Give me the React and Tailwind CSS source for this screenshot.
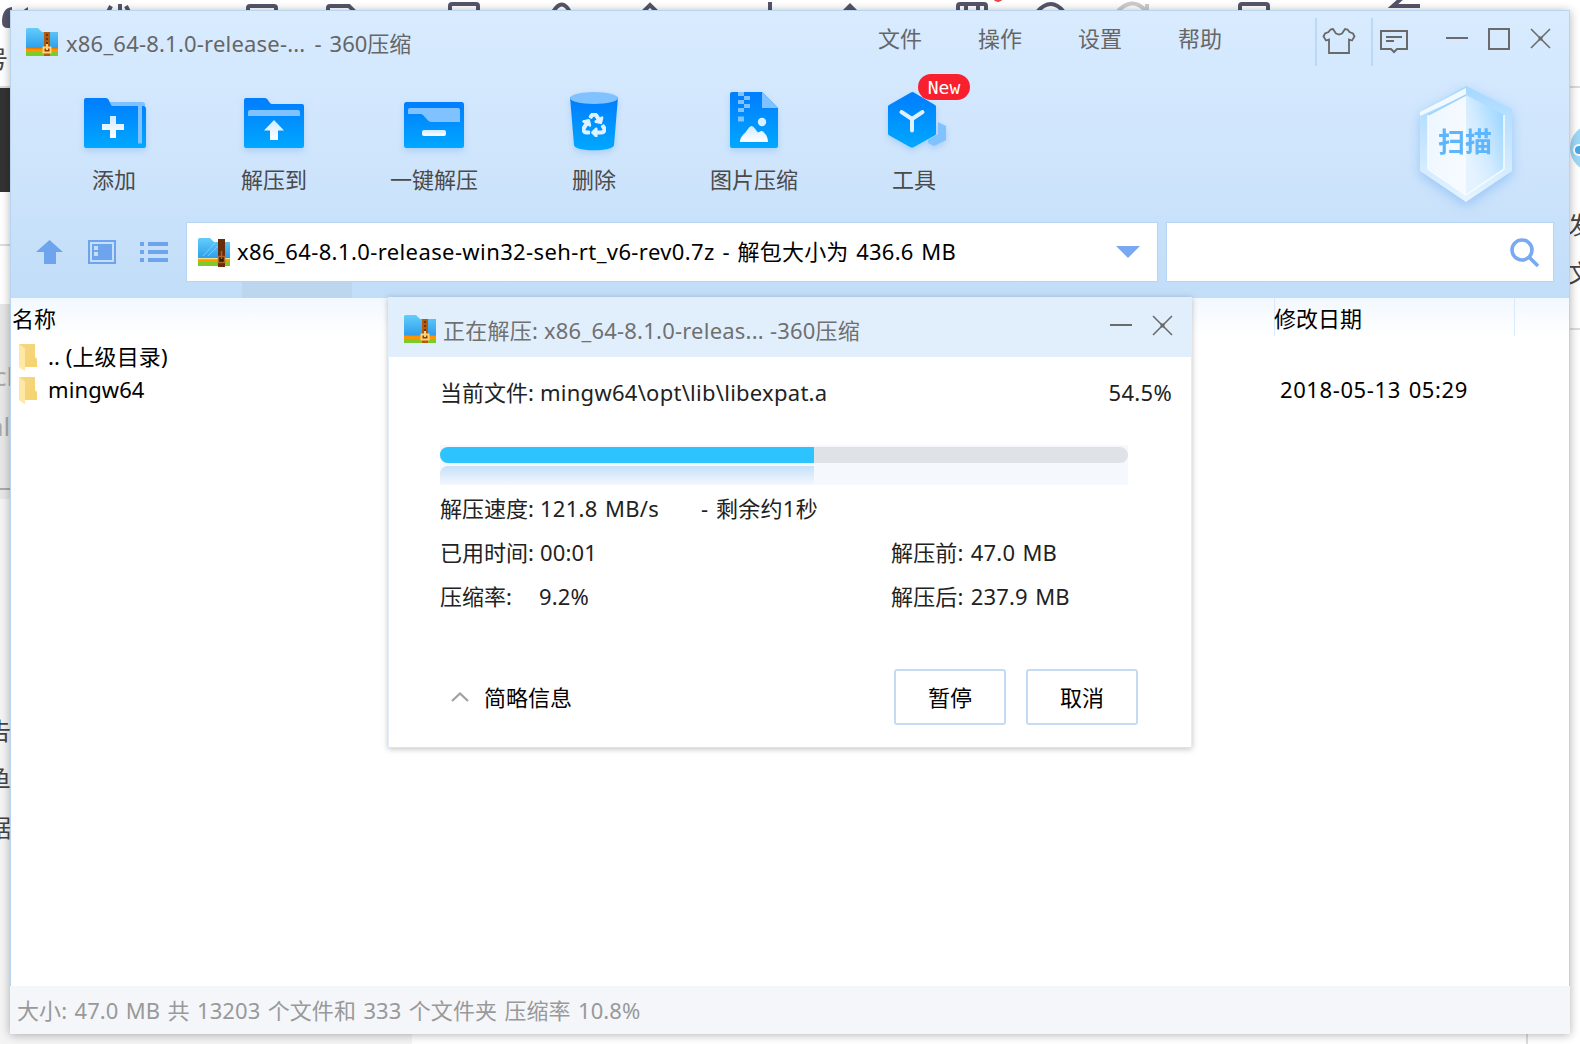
import React from 'react';
import { FaRecycle } from 'react-icons/fa';

const tools = [
  { label: '添加', icon: AddIcon },
  { label: '解压到', icon: ExtractIcon },
  { label: '一键解压', icon: OneKeyIcon },
  { label: '删除', icon: TrashIcon },
  { label: '图片压缩', icon: ImageZipIcon },
  { label: '工具', icon: ToolsIcon, badge: 'New' },
];

const files = [
  { name: '.. (上级目录)', date: '' },
  { name: 'mingw64', date: '2018-05-13 05:29' },
];

const progress = 54.3;

function Gradients() {
  return (
    <svg className="absolute h-0 w-0">
      <defs>
        <linearGradient id="blue" x1="0" y1="0" x2="0" y2="1">
          <stop offset="0.1" stopColor="#0080ff" />
          <stop offset="1" stopColor="#00a8ff" />
        </linearGradient>
        <linearGradient id="pale" x1="0" y1="0" x2="0" y2="1">
          <stop offset="0" stopColor="#d0eaff" />
          <stop offset="1" stopColor="#ffffff" />
        </linearGradient>
        <linearGradient id="zip" x1="0" y1="0" x2="0" y2="1">
          <stop offset="0" stopColor="#63cdfa" />
          <stop offset="1" stopColor="#2f9fec" />
        </linearGradient>
        <linearGradient id="folder" x1="0" y1="0" x2="1" y2="1">
          <stop offset="0" stopColor="#f6d683" />
          <stop offset="1" stopColor="#f5d36e" />
        </linearGradient>
      </defs>
    </svg>
  );
}

function ToolSvg({ children }) {
  return (
    <svg width="80" height="72" viewBox="0 0 80 72" className="drop-shadow-[0_3px_3px_rgba(90,160,240,0.3)]">
      {children}
    </svg>
  );
}

function AddIcon() {
  return (
    <ToolSvg>
      <path d="M34 16H68a3 3 0 0 1 3 3v6H34z" fill="#80c2ff" />
      <path d="M12 12H32a3 3 0 0 1 2.500 1.500L37 19a2 2 0 0 0 2 1H69a3 3 0 0 1 3 3V60a2 2 0 0 1-2 2H12a2 2 0 0 1-2-2V14a2 2 0 0 1 2-2z" fill="url(#blue)" />
      <path d="M64 18h4v39.500h-4z" fill="#80c2ff" />
      <path d="M36 30h6v8h8v6h-8v8h-6v-8h-8v-6h8z" fill="url(#pale)" />
    </ToolSvg>
  );
}

function ExtractIcon() {
  return (
    <ToolSvg>
      <path d="M12 12H31a3 3 0 0 1 2.500 1.500L36 17a3 3 0 0 0 2 1H68a2 2 0 0 1 2 2V60a2 2 0 0 1-2 2H12a2 2 0 0 1-2-2V14a2 2 0 0 1 2-2z" fill="url(#blue)" />
      <path d="M16 24H64a2 2 0 0 1 2 2v4H14v-4a2 2 0 0 1 2-2z" fill="#80c2ff" />
      <path d="M40 34L50 44.500H44V54H36V44.500H30z" fill="url(#pale)" />
    </ToolSvg>
  );
}

function OneKeyIcon() {
  return (
    <ToolSvg>
      <rect x="10" y="16" width="60" height="46" rx="2.500" fill="url(#blue)" />
      <path d="M16 22H64a2 2 0 0 1 2 2V36H38a6 6 0 0 1-4-1.500L29 29a4 4 0 0 0-3-1H14V24a2 2 0 0 1 2-2z" fill="#80c2ff" />
      <rect x="28" y="44" width="24" height="6" rx="2" fill="url(#pale)" />
    </ToolSvg>
  );
}

function TrashIcon() {
  return (
    <ToolSvg>
      <path d="M16 11H64L60 59C60 66 20 66 20 59z" fill="url(#blue)" />
      <ellipse cx="40" cy="12" rx="24" ry="6" fill="#80c2ff" />
      <FaRecycle x="28" y="27" size={24} color="#e0f2ff" stroke="#e0f2ff" strokeWidth="24" />
    </ToolSvg>
  );
}

function ImageZipIcon() {
  return (
    <ToolSvg>
      <path d="M18 6H48L64 22V60a2 2 0 0 1-2 2H18a2 2 0 0 1-2-2V8a2 2 0 0 1 2-2z" fill="url(#blue)" />
      <path d="M48 6L64 22H48z" fill="#80c2ff" />
      <path d="M24 6h6v4h-6zM30 10h6v4h-6zM24 14h6v4h-6zM30 18h6v4h-6zM24 22h6v4h-6zM24 30.500h6v5h-6z" fill="#80c2ff" />
      <circle cx="48" cy="36" r="4.200" fill="#d8efff" />
      <path d="M26 54.500Q27 50 31 47L35 41.500Q37.500 38.500 40 41.500L44 46.500L47 45Q49 44.500 50 46.500Q54 50.500 54 56H26z" fill="url(#pale)" />
    </ToolSvg>
  );
}

function ToolsIcon() {
  return (
    <ToolSvg>
      <path d="M64 36L72 40V54L60 60L54 57V54L64 48z" fill="#80c2ff" />
      <path d="M36.500 6.800Q38 5.500 39.500 6.300L61 19Q62 19.500 62 20.500V47.500Q62 48.500 61 49.200L40 61Q38 62 36 61L15 49.200Q14 48.500 14 47.500V20.500Q14 19.500 15 19z" fill="url(#blue)" />
      <path d="M27.500 26L38 33L48.500 26M38 32.500V44.500" fill="none" stroke="#ddf1ff" strokeWidth="4" strokeLinecap="round" />
    </ToolSvg>
  );
}

function ZipIcon({ dark }) {
  return (
    <svg width="32" height="29" viewBox="0 0 32 29" className="block shrink-0">
      <path d="M0 1.500Q0 0 1.500 0H12L16 4H32V20H0z" fill="url(#zip)" />
      {dark && <path d="M5 18L18 4M10 18L20 8" stroke="#8bdcfa" strokeWidth="1" opacity="0.700" />}
      <path d="M0 20h32v4H0z" fill="#ff9800" />
      <path d="M0 20h32v1.200H0z" fill={dark ? '#f4e38a' : '#f47b00'} />
      <path d="M0 24h32v4H0z" fill="#7ccb28" />
      <path d={dark ? 'M20 1h7v28h-7z' : 'M18 4h6v24h-6z'} fill={dark ? '#6b2c0c' : '#b45a0c'} />
      {dark ? (
        <path d="M20.500 18.500h6v6h-6zM23.500 13v8" fill="#3d1505" stroke="#a8652a" strokeWidth="1.400" />
      ) : (
        <>
          <path d="M20 6h2v2h-2zM20 10h2v2h-2zM20 14h2v2h-2z" fill="#6e3408" />
          <path d="M17.500 19.500h7v5h-7zM21 16v6" fill="#8a3b08" stroke="#ffd478" strokeWidth="2" />
        </>
      )}
    </svg>
  );
}

function FolderIcon() {
  return (
    <svg width="19" height="28" viewBox="0 0 19 28" className="block shrink-0">
      <path d="M0 0H16V13L18 15V23H5z" fill="url(#folder)" />
      <path d="M0 0L6 4.500V27L1 24Q0 23 0 22z" fill="#ffe7a6" />
    </svg>
  );
}

function CloseIcon() {
  return (
    <svg width="22" height="22" viewBox="0 0 22 22" className="block">
      <path d="M1 1L20 20M20 1L1 20" stroke="#6b6b6b" strokeWidth="1.600" />
      <path d="M8.500 8.500h4v4h-4z" fill="#6b6b6b" />
    </svg>
  );
}

function Shield() {
  return (
    <div className="relative h-[116px] w-[92px] drop-shadow-[0_4px_6px_rgba(120,180,245,0.6)]">
      <svg width="92" height="116" viewBox="0 0 92 116" className="block">
        <defs>
          <linearGradient id="shieldL" x1="0" y1="0" x2="1" y2="0.500">
            <stop offset="0" stopColor="#ecf6ff" />
            <stop offset="1" stopColor="#f7fbff" />
          </linearGradient>
          <linearGradient id="shieldR" x1="0.900" y1="0.200" x2="0.200" y2="0.800">
            <stop offset="0" stopColor="#a2d8ff" />
            <stop offset="0.600" stopColor="#d4ecff" />
            <stop offset="1" stopColor="#e4f3ff" />
          </linearGradient>
          <linearGradient id="rim" x1="0" y1="0" x2="0" y2="1">
            <stop offset="0" stopColor="#a6d8ff" />
            <stop offset="1" stopColor="#e6f4ff" />
          </linearGradient>
        </defs>
        <path d="M46 0L92 23V85L46 116L0 85V26z" fill="url(#rim)" />
        <path d="M46 2L0 26V30L46 9z" fill="#f2f9ff" />
        <path d="M46 9L8 29V83L46 110z" fill="url(#shieldL)" />
        <path d="M46 9L84 29V83L46 110z" fill="url(#shieldR)" />
        <path d="M46 9L8 29" stroke="#9dd3fd" strokeWidth="1.500" />
        <path d="M84 29V83L46 109L8 83V29" fill="none" stroke="#f6fbff" strokeWidth="1.500" />
      </svg>
      <span className="absolute top-[37px] left-[18px] text-[27px] leading-[38px] font-bold text-[#5db6fc]">扫描</span>
    </div>
  );
}

// What shows of the desktop around the archive window
function Backdrop() {
  return (
    <div className="absolute inset-0 overflow-hidden bg-white text-[24px] leading-8 text-[#444]">
      <div className="absolute top-[86px] left-0 h-[2px] w-full bg-[#dcdcdc]" />
      <div className="absolute top-[88px] left-0 h-[104px] w-6 bg-[#333]" />
      <div className="absolute top-[244px] left-0 h-[2px] w-6 bg-[#ddd]" />
      <div className="absolute top-[304px] left-0 h-[195px] w-6 bg-[#e7e7e7]" />
      <div className="absolute top-[488px] left-0 h-[2px] w-6 bg-[#aaa]" />
      <div className="absolute top-[499px] left-0 h-[545px] w-[412px] bg-[#f4f4f4]" />
      <div className="absolute top-[328px] right-0 h-[2px] w-6 bg-[#ddd]" />
      <div className="absolute top-[1034px] left-[1526px] h-[10px] w-[2px] bg-[#ddd]" />
      <span className="absolute top-[43px] -left-[16px]">号</span>
      <span className="absolute top-[360px] -left-[6px] text-[26px] text-[#aaa]">ch</span>
      <span className="absolute top-[410px] -left-[11px] text-[26px] text-[#aaa]">al</span>
      <span className="absolute top-[715px] -left-[13px]">告</span>
      <span className="absolute top-[762px] -left-[13px]">鱼</span>
      <span className="absolute top-[812px] -left-[13px]">据</span>
      <span className="absolute top-[209px] left-[1568px]">发</span>
      <span className="absolute top-[257px] left-[1568px]">文</span>
      <svg width="1580" height="200" viewBox="0 0 1580 200" className="absolute top-0 left-0" fill="none" stroke="#55556a" strokeWidth="4">
        <path d="M2 22Q2 8 12 7V28H8Q2 28 2 22zM22 12Q24 9 28 7V12z" fill="#55556a" stroke="none" />
        <path d="M108 12L111 6M120 12V4M129 12L126 6M248 12V8Q248 6 250 6H274Q276 6 276 8V12M328 12V8Q328 6 330 6H349L355 12M450 12V6Q450 4 452 4H476Q478 4 478 6V12M553 12Q562 -3 570 12M643 12L650 5L657 12M770 2V12" />
        <path d="M842 11L850 3L858 11z" fill="#55556a" stroke="none" />
        <path d="M958 12V6Q958 4 960 4H984Q986 4 986 6V12M966 12V5M978 12V5M1037 12Q1051 -4 1064 12M1240 12V6Q1240 4 1242 4H1266Q1268 4 1268 6V12M1402 -2L1393 6H1420" />
        <path d="M1117 12Q1132 -4 1145 10M1147 4V12" stroke="#ccc" />
        <circle cx="998" cy="-3" r="5" fill="#e54545" stroke="none" />
        <circle cx="1594" cy="148" r="24" fill="#9ed8f7" stroke="none" />
        <circle cx="1579" cy="150" r="5" fill="#4aa8e8" stroke="#fff" strokeWidth="2" />
      </svg>
    </div>
  );
}

function TitleBar() {
  return (
    <div className="flex h-[62px] shrink-0 text-[#666]">
      <div className="flex flex-1 pt-[17px] pl-[15px]">
        <ZipIcon />
        <h1 className="ml-2 flex leading-[30px]">
          <span className="tracking-[0.2px]">x86_64-8.1.0-release-...</span>
          <span className="mr-2 ml-[9px]">-</span>
          <span>360压缩</span>
        </h1>
      </div>
      <nav className="flex gap-14 pt-[12px] leading-[31px]">
        <span>文件</span>
        <span>操作</span>
        <span>设置</span>
        <span>帮助</span>
      </nav>
      <div className="ml-[93px] flex pt-[7px]">
        <div className="h-12 w-14 border-l-2 border-[#bcd8f5] pt-[10px] pl-[5px]">
          <svg width="34" height="28" viewBox="0 0 34 28" className="block" fill="none" stroke="#696969" strokeWidth="1.800">
            <path d="M11 1L8.500 1.500L6.500 4L3 5.500L1.500 8.500L4 12.500L7 11.500V25H27V11.500L30 12.500L32.500 8.500L31 5.500L27.500 4L25.500 1.500L23 1L20 5.500L17 6.500L14 5.500z" />
          </svg>
        </div>
        <div className="h-12 w-[55px] border-l-2 border-[#bcd8f5] pt-[12px] pl-[7px]">
          <svg width="28" height="26" viewBox="0 0 28 26" className="block" fill="none" stroke="#696969" strokeWidth="2">
            <path d="M1 1H27V19H17L14 22L11 19H1zM6 7H22M6 11H14" />
          </svg>
        </div>
      </div>
      <div className="flex gap-5 pt-[17px] pr-[17px] pl-[20px]">
        <div className="mt-[9px] h-[2px] w-[22px] bg-[#6b6b6b]" />
        <div className="size-[22px] border-2 border-[#6b6b6b]" />
        <CloseIcon />
      </div>
    </div>
  );
}

function Toolbar() {
  return (
    <div className="flex h-[149px] shrink-0 justify-between pt-[13px] pr-[57px] pl-[23px]">
      <div className="flex">
        {tools.map(({ label, icon: Icon, badge }) => (
          <div key={label} className="relative flex w-40 flex-col items-center text-[#4a4a4a]">
            <Icon />
            <span className="mt-[5px] leading-8">{label}</span>
            {badge && (
              <span className="absolute -top-[12px] left-[84px] h-[26px] w-[52px] rounded-full bg-[#f8202e] text-center font-['DejaVu_Sans_Mono',monospace] text-[18px] leading-[27px] text-white">
                {badge}
              </span>
            )}
          </div>
        ))}
      </div>
      <Shield />
    </div>
  );
}

function AddressBar() {
  return (
    <div className="flex h-[76px] shrink-0 pr-[15px]">
      <div className="flex w-[175px] gap-6 pt-[18px] pl-[25px]">
        <svg width="28" height="24" viewBox="0 0 28 24" fill="#6ea3ee">
          <path d="M13.500 0L27 12H20V24H8V12H0z" />
        </svg>
        <svg width="28" height="24" viewBox="0 0 28 24" fill="#6ea3ee">
          <path d="M1 1H27V23H1z" fill="none" stroke="#6ea3ee" strokeWidth="2" />
          <path fillRule="evenodd" d="M4 4H24V20H4zM6 6v4h4V6zM6 12v4h4v-4z" />
        </svg>
        <svg width="28" height="24" viewBox="0 0 28 24" fill="#6ea3ee">
          <path d="M0 2h4v4H0zM8 2h20v4H8zM0 10h4v4H0zM8 10h20v4H8zM0 18h4v4H0zM8 18h20v4H8z" />
        </svg>
      </div>
      <div className="flex h-[60px] w-[972px] border border-[#b7d5f3] bg-white pt-[15px] pl-[11px] text-black">
        <ZipIcon dark />
        <span className="ml-[7px] leading-[27px] tracking-[0.4px]">x86_64-8.1.0-release-win32-seh-rt_v6-rev0.7z</span>
        <span className="leading-[27px] [word-spacing:1.8px] tracking-[0.2px] whitespace-pre"> - 解包大小为 436.6 MB</span>
        <svg width="24" height="12" viewBox="0 0 24 12" className="mt-[8px] mr-[17px] ml-auto">
          <path d="M0 0H24L12 12z" fill="#78a9f1" />
        </svg>
      </div>
      <div className="ml-2 flex h-[60px] flex-1 justify-end border border-[#b7d5f3] bg-white pt-[15px] pr-[13px]">
        <svg width="30" height="29" viewBox="0 0 30 29" fill="none" stroke="#78a9f1">
          <circle cx="12" cy="12" r="10" strokeWidth="3.600" />
          <path d="M19 19L28 28" strokeWidth="3.600" />
        </svg>
      </div>
    </div>
  );
}

function FileList() {
  return (
    <div className="flex-1 bg-white text-black">
      <div className="flex h-[38px] bg-linear-to-b from-[#f2f8fe] to-white leading-[40px]">
        <span className="w-[1263px] pl-px">名称</span>
        <span className="w-[240px] border-l border-[#d8eafb] -indent-px">修改日期</span>
        <span className="border-l border-[#d8eafb]" />
      </div>
      <div className="pt-2">
        {files.map(({ name, date }) => (
          <div key={name} className="flex h-[33px] items-start pl-2">
            <FolderIcon />
            <span className="w-[1242px] pl-[10px] leading-6 tracking-[0.1px]">{name}</span>
            <span className="leading-6 [word-spacing:1.5px] tracking-[0.6px]">{date}</span>
          </div>
        ))}
      </div>
    </div>
  );
}

function ProgressDialog() {
  return (
    <section className="absolute top-[297px] left-[388px] flex h-[451px] w-[804px] flex-col border border-t-0 border-[#e0eefc] border-b-[#e0e2e4] bg-white text-[#222] shadow-[0_1px_6px_rgba(0,0,0,0.25)]">
      <header className="flex h-[60px] shrink-0 bg-[#e1effd] pt-[18px] pr-[17px] pl-[15px] text-[#707070]">
        <ZipIcon />
        <h2 className="ml-[7px] leading-[30px] tracking-[0.22px] whitespace-pre">正在解压: x86_64-8.1.0-releas... -360压缩</h2>
        <div className="mt-[9px] ml-auto h-[2px] w-[22px] bg-[#6b6b6b]" />
        <div className="ml-5">
          <CloseIcon />
        </div>
      </header>
      <div className="flex pt-[19px] pr-[19px] pl-[51px] leading-8">
        <span className="w-[100px]">当前文件:</span>
        <span className="flex-1 tracking-[0.26px]">mingw64\opt\lib\libexpat.a</span>
        <span className="tracking-[0.3px]">54.5%</span>
      </div>
      <div className="mt-[37px] ml-[51px] h-10 w-[688px] bg-[#f5f9fe] pt-[2px]">
        <div className="h-4 overflow-hidden rounded-full bg-[#dfe2e7]">
          <div className="h-full bg-[#2cc3ff]" style={{ width: `${progress}%` }} />
        </div>
        <div className="mt-[3px] h-[19px] rounded-tl-lg bg-linear-to-b from-[#c6e0f9] to-[#f4f8fe]" style={{ width: `${progress}%` }} />
      </div>
      <div className="mt-px grid grid-cols-[100px_161px_190px_1fr] pl-[51px] leading-[44px] [word-spacing:1.5px] tracking-[0.15px]">
        <span className="tracking-normal">解压速度:</span>
        <span className="tracking-[0.25px]">121.8 MB/s</span>
        <span className="col-span-2 tracking-[0.3px]">- 剩余约1秒</span>
        <span className="tracking-normal">已用时间:</span>
        <span className="col-span-2">00:01</span>
        <span>解压前: 47.0 MB</span>
        <span className="tracking-normal">压缩率:</span>
        <span className="col-span-2 -ml-px">9.2%</span>
        <span>解压后: 237.9 MB</span>
      </div>
      <footer className="mt-auto mb-[22px] flex h-14 items-center gap-5 pr-[53px] pl-[62px] text-black">
        <svg width="18" height="12" viewBox="0 0 18 12" fill="none" stroke="#a0a0a0" strokeWidth="2.200">
          <path d="M1 10L9 2.500L17 10" />
        </svg>
        <span className="-ml-[5px] flex-1 leading-8">简略信息</span>
        <button className="h-14 w-28 rounded-[3px] border-2 border-[#c5dbf4]">暂停</button>
        <button className="h-14 w-28 rounded-[3px] border-2 border-[#c5dbf4]">取消</button>
      </footer>
    </section>
  );
}

export default function App() {
  return (
    <div className="relative h-[1044px] w-[1580px] overflow-hidden p-[10px] font-['Noto_Sans','Noto_Sans_CJK_SC',sans-serif] text-[22px]">
      <Gradients />
      <Backdrop />
      <main className="relative flex h-[1024px] w-[1560px] flex-col bg-white shadow-[0_1px_9px_rgba(0,0,0,0.3)]">
        <div className="flex flex-1 flex-col border border-b-0 border-[#b9d4ef]">
          <div className="bg-linear-to-b from-[#d8ebff] via-[#cfe5fc] to-[#c1ddf8]">
            <TitleBar />
            <Toolbar />
            <AddressBar />
          </div>
          <div className="absolute top-[272px] left-[232px] h-[16px] w-[110px] bg-[#bcd6ef]" />
          <FileList />
        </div>
        <footer className="h-12 shrink-0 bg-[#f4f6fa] pl-[7px] leading-[48px] [word-spacing:1.6px] tracking-[0.07px] whitespace-pre text-[#999]">
          大小: 47.0 MB 共 13203 个文件和 333 个文件夹 压缩率 10.8%
        </footer>
      </main>
      <ProgressDialog />
    </div>
  );
}
